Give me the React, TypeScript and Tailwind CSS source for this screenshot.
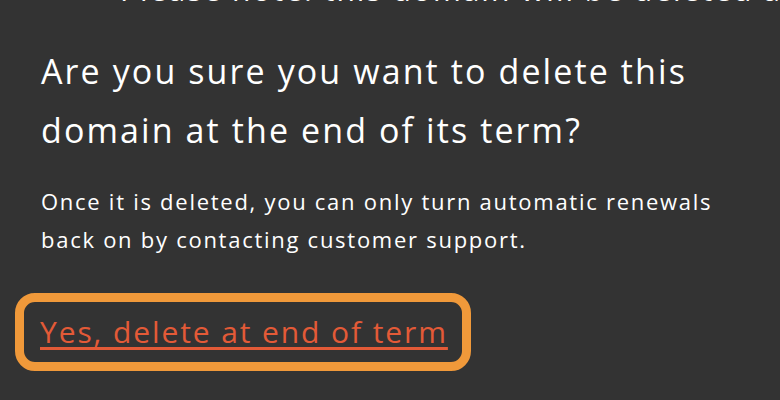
export default function App() {
  return (
    <div className="w-[780px] h-[400px] overflow-hidden bg-[#333333] text-white" style={{ fontFamily: '"Open Sans", sans-serif' }}>
      <div className="h-[3px] overflow-hidden pl-[120px]">
        <div className="mt-[-25px] text-[30px] leading-[30px] whitespace-nowrap tracking-[2px]">Please note: this domain will be deleted at the end of its term</div>
      </div>
      <div className="pl-[41px] pr-[20px]">
        <h2 className="mt-[39px] text-[34px] leading-[59px] font-normal tracking-[2.1px]">Are you sure you want to delete this domain at the end of its term?</h2>
        <p className="mt-[22px] text-[22px] leading-[38px] tracking-[1.73px]">Once it is deleted, you can only turn automatic renewals back on by contacting customer support.</p>
      </div>
      <div className="pl-[15px] mt-[35px]">
        <button className="border-[9px] border-[#f0993a] rounded-[20px] pl-[16px] pr-[14px] py-[12px] text-[30px] leading-[36px] text-[#e35a37] underline decoration-[3px] underline-offset-[4px] tracking-[1.9px]">Yes, delete at end of term</button>
      </div>
    </div>
  );
}
